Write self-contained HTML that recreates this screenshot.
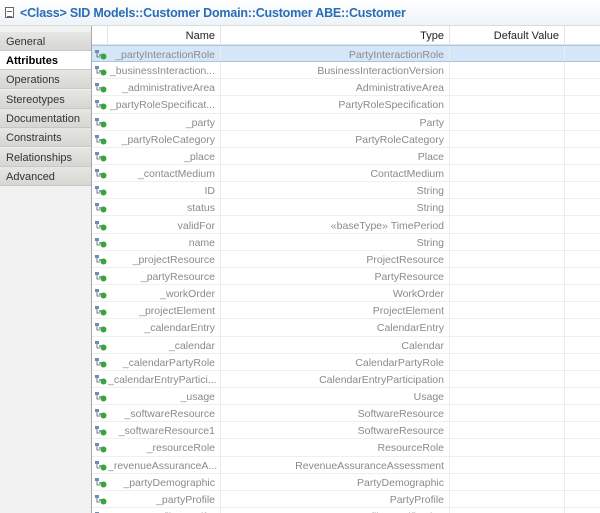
<!DOCTYPE html><html><head><style>
*{margin:0;padding:0;box-sizing:border-box}
html,body{width:600px;height:513px;overflow:hidden}
body{background:#fff;font-family:"Liberation Sans",sans-serif;position:relative}
.hdr{position:absolute;left:0;top:0;width:600px;height:26px;background:linear-gradient(#fff,#eef3f8);border-bottom:1px solid #d8dde3}
.hdr .t{position:absolute;left:20px;top:6px;font-size:12.5px;font-weight:bold;color:#2a6db5;white-space:nowrap;letter-spacing:-0.2px}
.doc{position:absolute;left:5px;top:7px;width:9px;height:11px;border:1px solid #666;background:#fff}
.doc:before{content:"";position:absolute;left:1px;top:3px;width:5px;height:4px;border-top:1px solid #666;border-bottom:1px solid #666}
.left{position:absolute;left:0;top:26px;width:92px;height:487px;background:#f2f2f2;border-right:1px solid #a8a8a8}
.tab{position:absolute;left:0;width:91px;height:19px;background:linear-gradient(#e6e6e2,#d6d6d2);border-bottom:1px solid #c8c8c4;font-size:11px;color:#333;padding:4px 0 0 6px}
.tab.sel{background:#fff;font-weight:bold;color:#000}
.tbl{position:absolute;left:92px;top:26px;width:508px;height:487px;overflow:hidden}
.th{position:absolute;top:0;height:19px;font-size:11px;color:#222;text-align:right;padding:4px 5px 0 0;border-right:1px solid #e4e4e4;border-bottom:1px solid #e4e4e4}
.row{position:absolute;left:0;width:508px;height:17.15px;border-bottom:1px solid #efefef}
.row.sel{background:#d6e6f9;border-top:1px solid #a9c4e3;border-bottom:1px solid #a9c4e3}
.c{position:absolute;top:0;height:100%;font-size:10.5px;color:#8a8a8a;text-align:right;padding:3px 5px 0 0;white-space:nowrap;overflow:hidden;border-right:1px solid #ececec}
.ic{position:absolute;left:3px;top:3px;width:12px;height:11px}
</style></head><body>
<div class="hdr"><div class="doc"></div><div class="t">&lt;Class&gt; SID Models::Customer Domain::Customer ABE::Customer</div></div>
<div class="left">
<div class="tab" style="top:6px">General</div>
<div class="tab sel" style="top:25px">Attributes</div>
<div class="tab" style="top:44px">Operations</div>
<div class="tab" style="top:64px">Stereotypes</div>
<div class="tab" style="top:83px">Documentation</div>
<div class="tab" style="top:102px">Constraints</div>
<div class="tab" style="top:122px">Relationships</div>
<div class="tab" style="top:141px">Advanced</div>
</div>
<div class="tbl" id="t">
<div class="th" style="left:0;width:16px"></div>
<div class="th" style="left:16px;width:113px">Name</div>
<div class="th" style="left:129px;width:229px">Type</div>
<div class="th" style="left:358px;width:115px">Default Value</div>
<div class="th" style="left:473px;width:35px;border-right:none"></div>
</div>
<script>
var d=[["_partyInteractionRole","PartyInteractionRole"],["_businessInteraction...","BusinessInteractionVersion"],["_administrativeArea","AdministrativeArea"],["_partyRoleSpecificat...","PartyRoleSpecification"],["_party","Party"],["_partyRoleCategory","PartyRoleCategory"],["_place","Place"],["_contactMedium","ContactMedium"],["ID","String"],["status","String"],["validFor","«baseType» TimePeriod"],["name","String"],["_projectResource","ProjectResource"],["_partyResource","PartyResource"],["_workOrder","WorkOrder"],["_projectElement","ProjectElement"],["_calendarEntry","CalendarEntry"],["_calendar","Calendar"],["_calendarPartyRole","CalendarPartyRole"],["_calendarEntryPartici...","CalendarEntryParticipation"],["_usage","Usage"],["_softwareResource","SoftwareResource"],["_softwareResource1","SoftwareResource"],["_resourceRole","ResourceRole"],["_revenueAssuranceA...","RevenueAssuranceAssessment"],["_partyDemographic","PartyDemographic"],["_partyProfile","PartyProfile"],["_partyProfileSpecif...","PartyProfileSpecification"]];
var ic='<svg class="ic" viewBox="0 0 12 11"><rect x="0" y="1" width="4" height="3" fill="#6a8fb5"/><rect x="4" y="5" width="4" height="2" fill="#8aa7c7"/><path d="M2 4v4h3" stroke="#556" fill="none" stroke-width="0.8"/><circle cx="8.5" cy="7.5" r="3" fill="#3ba33b"/></svg>';
var h='';for(var i=0;i<d.length;i++){var y=19+i*17.15;h+='<div class="row'+(i==0?' sel':'')+'" style="top:'+y+'px">'+ic+'<div class="c" style="left:16px;width:113px">'+d[i][0]+'</div><div class="c" style="left:129px;width:229px">'+d[i][1]+'</div><div class="c" style="left:358px;width:115px"></div></div>';}
document.getElementById('t').insertAdjacentHTML('beforeend',h);
</script>
</body></html>
